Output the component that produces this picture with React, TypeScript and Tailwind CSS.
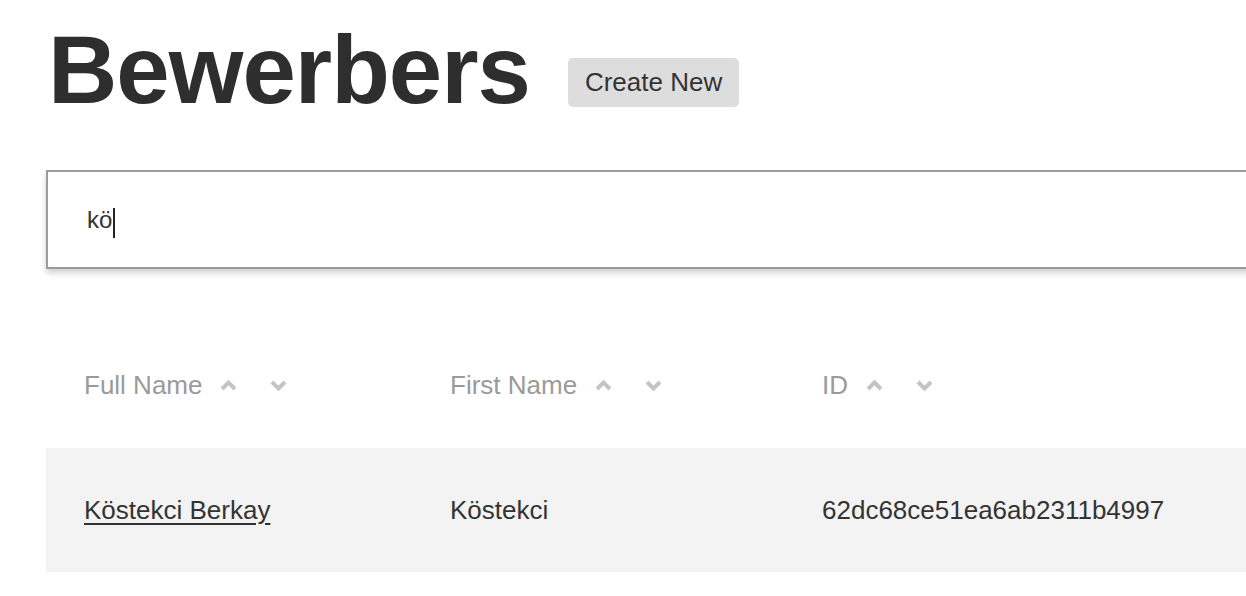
import { useState } from 'react'

interface Applicant {
  id: string
  fullName: string
  firstName: string
}

const APPLICANTS: Applicant[] = [
  { id: '62dc68ce51ea6ab2311b4997', fullName: 'Köstekci Berkay', firstName: 'Köstekci' },
]

const COLUMNS = ['Full Name', 'First Name', 'ID']

function Chevron({ up }: { up?: boolean }) {
  return (
    <svg width="17" height="11" viewBox="0 0 17 11" className="shrink-0">
      <polyline
        points={up ? '2,9 8.5,2.5 15,9' : '2,2 8.5,8.5 15,2'}
        fill="none"
        stroke="#c4c4c4"
        strokeWidth={4}
        strokeLinejoin="miter"
      />
    </svg>
  )
}

export default function App() {
  const [query, setQuery] = useState('kö')

  return (
    <div
      className="h-[596px] w-full overflow-clip bg-white text-[#333]"
      style={{ fontFamily: '"Liberation Sans", Arial, sans-serif' }}
    >
      <div className="w-[1300px] pl-[46px]">
        {/* Header */}
        <div className="flex items-start pt-[22px]">
          <h1 className="ml-[2px] text-[96px] font-bold leading-none tracking-[-1px] text-[#2e2e2e]">
            Bewerbers
          </h1>
          <button className="ml-[38px] mt-[36px] flex h-[49px] items-center rounded-[5px] bg-[#dddddd] px-[17px] text-[26px] text-[#333]">
            Create New
          </button>
        </div>

        {/* Search */}
        <div className="relative mt-[52px]">
          <input
            value={query}
            onChange={(e) => setQuery(e.target.value)}
            className="h-[99px] w-full border-2 border-[#9b9b9b] bg-white pl-[39px] text-[24px] text-[#333] caret-[#222] shadow-[0_4px_6px_rgba(0,0,0,0.18)] outline-none"
          />
          {/* text cursor as seen while typing */}
          <span className="pointer-events-none absolute left-[67px] top-[38px] h-[30px] w-[2px] bg-[#222]" />
        </div>

        {/* Table */}
        <div className="mt-[53px]">
          <div className="grid h-[126px] grid-cols-[366px_372px_1fr] items-center">
            {COLUMNS.map((col) => (
              <div key={col} className="flex items-center pl-[38px] text-[26px] text-[#9a9a9a]">
                <span>{col}</span>
                <button className="ml-[18px] flex items-center">
                  <Chevron up />
                </button>
                <button className="ml-[33px] flex items-center">
                  <Chevron />
                </button>
              </div>
            ))}
          </div>
          {APPLICANTS.map((a) => (
            <div
              key={a.id}
              className="grid h-[124px] grid-cols-[366px_372px_1fr] items-center bg-[#f3f3f3] text-[26px] text-[#333]"
            >
              <div className="pl-[38px]">
                <a href="#" className="underline decoration-[1.5px] underline-offset-[4px]">
                  {a.fullName}
                </a>
              </div>
              <div className="pl-[38px]">{a.firstName}</div>
              <div className="pl-[38px]">{a.id}</div>
            </div>
          ))}
        </div>
      </div>
    </div>
  )
}
